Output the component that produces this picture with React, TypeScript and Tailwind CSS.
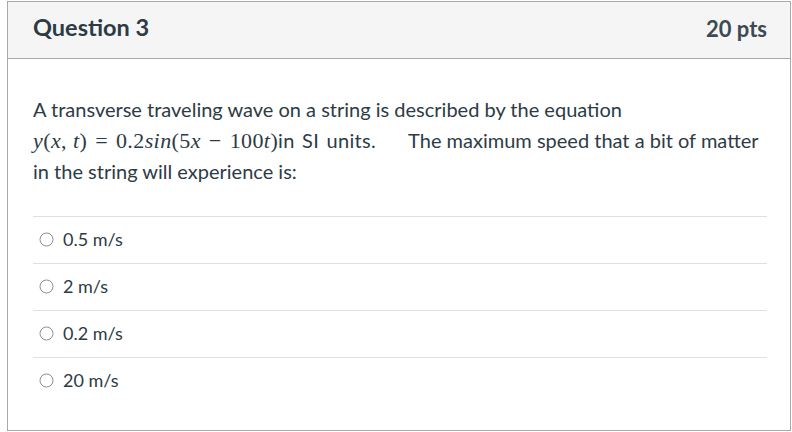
const answers = ['0.5 m/s', '2 m/s', '0.2 m/s', '20 m/s']

function MathExpr() {
  return (
    <span className="font-['Liberation_Serif',serif] text-[22px] tracking-[0.4px] text-[#2d3b45]">
      <i>y</i>(<i>x</i>, <i>t</i>)<span className="mx-[8px]">=</span>0.2<i>sin</i>(5<i>x</i>
      <span className="mx-[8px]">−</span>100<i>t</i>)
    </span>
  )
}

function Radio() {
  return (
    <svg className="w-[15px] h-[15px] flex-shrink-0" viewBox="0 0 15 15">
      <circle cx="7.5" cy="7.5" r="6.5" fill="white" stroke="#8f8f8f" strokeWidth="1" />
    </svg>
  )
}

export default function App() {
  return (
    <div className="bg-white w-[792px] h-[432px] pt-px pl-[7px] font-['Lato',sans-serif] text-[#2d3b45]">
      <div className="w-[784px] h-[430px] border border-[#a9a9a9] flex flex-col">
        {/* Header */}
        <div className="h-[57px] bg-[#f5f5f5] border-b border-[#a9a9a9] flex items-center justify-between pl-[25px] pr-[23px] pb-[4px]">
          <span className="text-[23.5px] font-bold">Question 3</span>
          <span className="text-[22px] font-bold text-[#3d4a52]">20 pts</span>
        </div>

        {/* Body */}
        <div className="pl-[25px] pr-[23px] pt-[35px]">
          <p className="text-[20px] leading-[30.5px]">
            A transverse traveling wave on a string is described by the equation <br />
            <MathExpr />
            <span className="inline-block w-[130px] tracking-[0.3px] [word-spacing:2px]">in SI units.</span>
            The maximum speed that a bit of matter in the string will experience is:
          </p>

          <div className="mt-[29px]">
            {answers.map((a) => (
              <div key={a} className="border-t border-[#e0e0e0] h-[47px] flex items-center gap-[9px] pl-[6px]">
                <Radio />
                <span className="text-[18px]">{a}</span>
              </div>
            ))}
          </div>
        </div>
      </div>
    </div>
  )
}
